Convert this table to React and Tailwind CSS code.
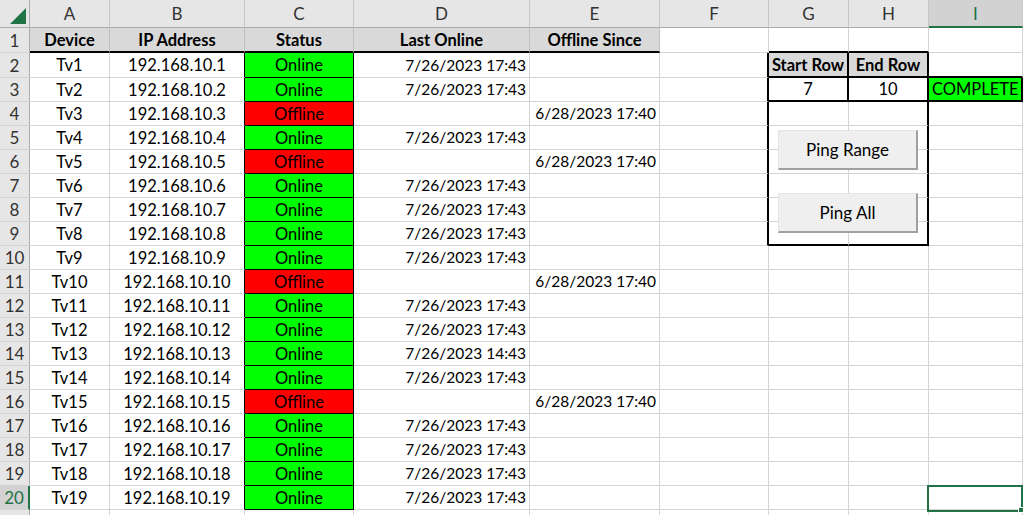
import React from "react";
import { twMerge } from "tailwind-merge";

const W = [
  "w-[30px]",
  "w-[80px]",
  "w-[135px]",
  "w-[109px]",
  "w-[176px]",
  "w-[130px]",
  "w-[109px]",
  "w-[80px]",
  "w-[80px]",
  "w-[94px]",
];

const devices = [
  ["Tv1", "192.168.10.1", true, "7/26/2023 17:43"],
  ["Tv2", "192.168.10.2", true, "7/26/2023 17:43"],
  ["Tv3", "192.168.10.3", false],
  ["Tv4", "192.168.10.4", true, "7/26/2023 17:43"],
  ["Tv5", "192.168.10.5", false],
  ["Tv6", "192.168.10.6", true, "7/26/2023 17:43"],
  ["Tv7", "192.168.10.7", true, "7/26/2023 17:43"],
  ["Tv8", "192.168.10.8", true, "7/26/2023 17:43"],
  ["Tv9", "192.168.10.9", true, "7/26/2023 17:43"],
  ["Tv10", "192.168.10.10", false],
  ["Tv11", "192.168.10.11", true, "7/26/2023 17:43"],
  ["Tv12", "192.168.10.12", true, "7/26/2023 17:43"],
  ["Tv13", "192.168.10.13", true, "7/26/2023 14:43"],
  ["Tv14", "192.168.10.14", true, "7/26/2023 17:43"],
  ["Tv15", "192.168.10.15", false],
  ["Tv16", "192.168.10.16", true, "7/26/2023 17:43"],
  ["Tv17", "192.168.10.17", true, "7/26/2023 17:43"],
  ["Tv18", "192.168.10.18", true, "7/26/2023 17:43"],
  ["Tv19", "192.168.10.19", true, "7/26/2023 17:43"],
];

const Cell = ({ col, className, children }) => (
  <div
    className={twMerge(
      "shrink-0 h-full flex items-center justify-center pt-[1px] whitespace-nowrap overflow-hidden border-r border-b border-[#d4d4d4]",
      W[col],
      className
    )}
  >
    {children}
  </div>
);

const RowNum = ({ n, active }) => (
  <Cell
    col={0}
    className={
      active
        ? "bg-[#d2d2d2] text-[#217346] border-r-2 border-r-[#217346] border-b-[#d4d4d4] text-[17px]"
        : "bg-[#e6e6e6] text-[#333] border-r-[#ababab] text-[17px]"
    }
  >
    {n}
  </Cell>
);

// right-hand block, columns F..I for a given sheet row
const sideCells = (r) => {
  const boxRow = r >= 2 && r <= 9;
  const f = boxRow ? "border-r-2 border-r-black" : "";
  let g = "";
  let h = boxRow ? "border-r-2 border-r-black" : "";
  let i = "";
  let gText = null;
  let hText = null;
  let iText = null;
  if (r === 1) {
    g = "border-b-2 border-b-black";
    h = "border-b-2 border-b-black";
  }
  if (r === 2) {
    g = "bg-[#d9d9d9] font-bold border-r-2 border-r-black border-b-2 border-b-black";
    h = "bg-[#d9d9d9] font-bold border-r-2 border-r-black border-b-2 border-b-black";
    i = "border-b-2 border-b-black";
    gText = "Start Row";
    hText = "End Row";
  }
  if (r === 3) {
    g = "border-r-2 border-r-black border-b-2 border-b-black";
    h = "border-r-2 border-r-black border-b-2 border-b-black";
    i = "bg-[#00ff00] justify-start pl-[3px] border-r-2 border-r-black border-b-2 border-b-black";
    gText = "7";
    hText = "10";
    iText = "COMPLETE";
  }
  if (r === 9) {
    g = "border-b-2 border-b-black";
    h = "border-r-2 border-r-black border-b-2 border-b-black";
  }
  return (
    <>
      <Cell col={6} className={f} />
      <Cell col={7} className={g}>{gText}</Cell>
      <Cell col={8} className={h}>{hText}</Cell>
      <Cell col={9} className={i}>{iText}</Cell>
    </>
  );
};

const Button = ({ label, className }) => (
  <div
    className={twMerge(
      "absolute left-[778px] w-[140px] h-[40px] flex items-center justify-center bg-[#efefef] text-[17px] text-black border border-[#e4e4e4] border-r-2 border-b-2 border-r-[#a0a0a0] border-b-[#a0a0a0]",
      className
    )}
  >
    {label}
  </div>
);

export default function App() {
  const headers = ["A", "B", "C", "D", "E", "F", "G", "H", "I"];
  return (
    <div className="relative w-[1023px] h-[515px] overflow-hidden bg-white text-black text-[16.5px] font-['Lato','Noto_Sans',sans-serif]">
      {/* column letters */}
      <div className="flex h-[28px] bg-[#e6e6e6]">
        <Cell col={0} className="relative bg-[#e6e6e6] border-r-[#ababab] border-b-[#ababab]">
          <svg className="absolute left-0 top-0" width="29" height="27" viewBox="0 0 29 27">
            <polygon points="26,8 26,24 10,24" fill="#217346" />
          </svg>
        </Cell>
        {headers.map((h, i) => (
          <Cell
            key={h}
            col={i + 1}
            className={
              h === "I"
                ? "bg-[#d2d2d2] text-[#217346] text-[17px] border-r-[#c8c8c8] border-b-2 border-b-[#217346]"
                : "text-[#333] text-[17px] border-r-[#c8c8c8] border-b-[#ababab]"
            }
          >
            {h}
          </Cell>
        ))}
      </div>

      {/* row 1: table headings */}
      <div className="flex h-[25px]">
        <RowNum n={1} />
        {["Device", "IP Address", "Status", "Last Online", "Offline Since"].map((t, i) => (
          <Cell
            key={t}
            col={i + 1}
            className="bg-[#d9d9d9] font-bold border-r-[#bfbfbf] border-b-2 border-b-black"
          >
            {t}
          </Cell>
        ))}
        {sideCells(1)}
      </div>

      {devices.map(([name, ip, online, last], idx) => {
        const r = idx + 2;
        return (
          <div key={name} className={r === 2 ? "flex h-[25px]" : "flex h-[24px]"}>
            <RowNum n={r} active={r === 20} />
            <Cell col={1}>{name}</Cell>
            <Cell col={2} className="border-r-black">{ip}</Cell>
            <Cell
              col={3}
              className={
                online
                  ? "bg-[#00ff00] border-r-black border-b-black"
                  : "bg-[#ff0000] border-r-black border-b-black"
              }
            >
              {online ? "Online" : "Offline"}
            </Cell>
            <Cell col={4} className="justify-end pr-[3px] text-[15.5px]">{online ? last : ""}</Cell>
            <Cell col={5} className="justify-end pr-[3px] text-[15.5px]">{online ? "" : "6/28/2023 17:40"}</Cell>
            {sideCells(r)}
          </div>
        );
      })}

      {/* row 21, cut off by the window */}
      <div className="flex h-[24px]">
        <RowNum n="" />
        {[1, 2, 3, 4, 5, 6, 7, 8, 9].map((c) => (
          <Cell key={c} col={c} />
        ))}
      </div>

      {/* form buttons */}
      <Button label="Ping Range" className="top-[130px]" />
      <Button label="Ping All" className="top-[193px]" />

      {/* active cell I20 */}
      <div className="absolute left-[927px] top-[485px] w-[96px] h-[27px] border-2 border-[#217346]" />
      <div className="absolute left-[1018px] top-[507px] w-[6px] h-[6px] bg-[#217346] border border-white" />
    </div>
  );
}
